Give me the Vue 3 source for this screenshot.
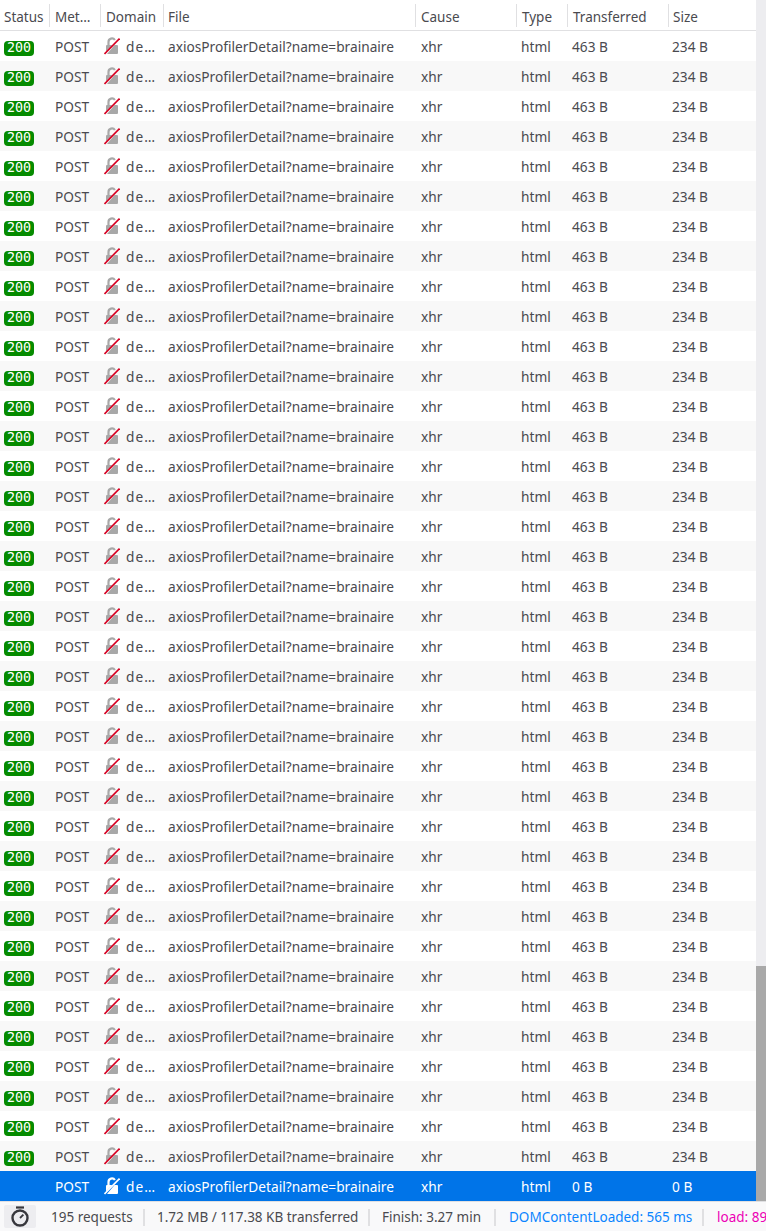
<script setup>
const cols = ['Status', 'Met…', 'Domain', 'File', 'Cause', 'Type', 'Transferred', 'Size']
const rows = Array.from({ length: 39 }, (_, i) => ({ id: i, selected: i === 38 }))
</script>

<template>
  <div class="panel">
    <div class="main">
      <div class="table">
        <div class="head">
          <div v-for="c in cols" :key="c" class="hcell">{{ c }}</div>
        </div>
        <div
          v-for="r in rows"
          :key="r.id"
          class="row"
          :class="{ even: r.id % 2 === 1, selected: r.selected }"
        >
          <div class="cell status"><span v-if="!r.selected" class="badge">200</span></div>
          <div class="cell method">POST</div>
          <div class="cell domain">
            <svg class="lock" width="16" height="18" viewBox="0 0 16 18">
              <path class="lock-body" d="M2 9a1 1 0 0 1 1-1h5.500L2 14.500zM10.500 8H13a1 1 0 0 1 1 1v7a1 1 0 0 1-1 1H3z" />
              <path class="lock-shackle" d="M4.500 8V5a3.500 3.500 0 0 1 6.400-2" />
              <path class="lock-slash" d="M0.500 17L15.500 1.500" />
            </svg>
            <span>de…</span>
          </div>
          <div class="cell">axiosProfilerDetail?name=brainaire</div>
          <div class="cell cause">xhr</div>
          <div class="cell">html</div>
          <div class="cell">{{ r.selected ? '0 B' : '463 B' }}</div>
          <div class="cell size">{{ r.selected ? '0 B' : '234 B' }}</div>
        </div>
      </div>
      <div class="scrollbar"><div class="thumb"></div></div>
    </div>
    <div class="footer">
      <div class="timer">
        <svg width="20" height="22" viewBox="0 0 20 22" fill="none">
          <path d="M6 1.500h8" class="t" stroke-width="2.200" />
          <circle cx="10" cy="12" r="7.500" class="t" stroke-width="2.400" />
          <path d="M10 12l3.400-3.400" class="t" stroke-width="1.800" />
        </svg>
      </div>
      <div class="fitem first">195 requests</div>
      <div class="fitem second">1.72 MB / 117.38 KB transferred</div>
      <div class="fitem third">Finish: 3.27 min</div>
      <div class="fitem dom">DOMContentLoaded: 565 ms</div>
      <div class="fitem load">load: 894 ms</div>
    </div>
  </div>
</template>

<style>
html, body { margin: 0; padding: 0; overflow: hidden; background: #fff; }
</style>

<style scoped>
.panel {
  width: 766px;
  height: 1231px;
  display: flex;
  flex-direction: column;
  overflow: hidden;
  font-family: "Noto Sans", sans-serif;
  font-size: 13.5px;
  color: #4a4a4f;
}
.main { display: flex; height: 1201px; }
.table { width: 756px; flex: none; }
.head, .row {
  display: grid;
  grid-template-columns: 49px 51px 63px 252px 101px 51px 101px 88px;
}
.head {
  height: 30px;
  background: #fff;
  border-bottom: 1px solid #e0e0e2;
}
.hcell {
  padding-left: 5px;
  margin: 4px 0 3px;
  height: 23px;
  line-height: 26px;
  border-left: 1px solid #e0e0e2;
  white-space: nowrap;
  overflow: hidden;
}
.hcell:first-child { border-left: 0; padding-left: 4px; }
.hcell:nth-child(4), .hcell:nth-child(8) { padding-left: 4px; }
.row { height: 30px; background: #fff; font-size: 13.7px; }
.row.even { background: #f8f8f8; }
.row.selected { background: #0074e8; color: #fff; }
.cell {
  padding: 1px 0 0 5px;
  line-height: 30px;
  height: 30px;
  box-sizing: border-box;
  white-space: nowrap;
  overflow: hidden;
}
.method, .cause { padding-left: 6px; }
.size { padding-left: 4px; }
.status { padding: 0 0 0 4px; }
.badge {
  display: block;
  width: 30px;
  height: 15px;
  margin-top: 10px;
  background: #058b00;
  border-radius: 4px;
  color: #fff;
  font-family: "DejaVu Sans Mono", monospace;
  font-size: 13.33px;
  line-height: 13px;
  text-align: center;
}
.domain { display: flex; align-items: center; gap: 6px; padding: 0 0 0 4px; }
.domain span { padding-top: 1px; letter-spacing: 1px; }
.lock { flex: none; }
.lock-body { fill: #a8a8a8; }
.lock-shackle { stroke: #a8a8a8; stroke-width: 2.200; fill: none; }
.lock-slash { stroke: #d70022; stroke-width: 1.600; fill: none; }
.selected .lock-body { fill: #fff; }
.selected .lock-shackle { stroke: #fff; }
.selected .lock-slash { stroke: #fff; }
.scrollbar {
  width: 10px;
  flex: none;
  background: #ededf0;
  display: flex;
  flex-direction: column;
  justify-content: flex-end;
}
.thumb { height: 235px; background: #a9a9a9; }
.footer {
  height: 29px;
  border-top: 1px solid #e0e0e2;
  background: #f9f9fa;
  display: flex;
  align-items: center;
  white-space: nowrap;
  overflow: hidden;
}
.timer {
  width: 32px;
  height: 23px;
  margin-left: 4px;
  background: #ededf0;
  border-radius: 2px;
  display: flex;
  align-items: center;
  justify-content: center;
  flex: none;
}
.t { stroke: #38383d; }
.fitem {
  flex: none;
  box-sizing: border-box;
  height: 17px;
  line-height: 17px;
  margin-top: 1px;
  border-right: 2px solid #e0e0e2;
}
.first { margin-left: 15px; width: 94px; }
.second { padding-left: 12px; width: 225px; }
.third { padding-left: 12px; width: 126px; }
.dom { padding-left: 13px; width: 208px; color: #0a84ff; }
.load { padding-left: 13px; color: #ed00b5; border-right: 0; }
</style>
